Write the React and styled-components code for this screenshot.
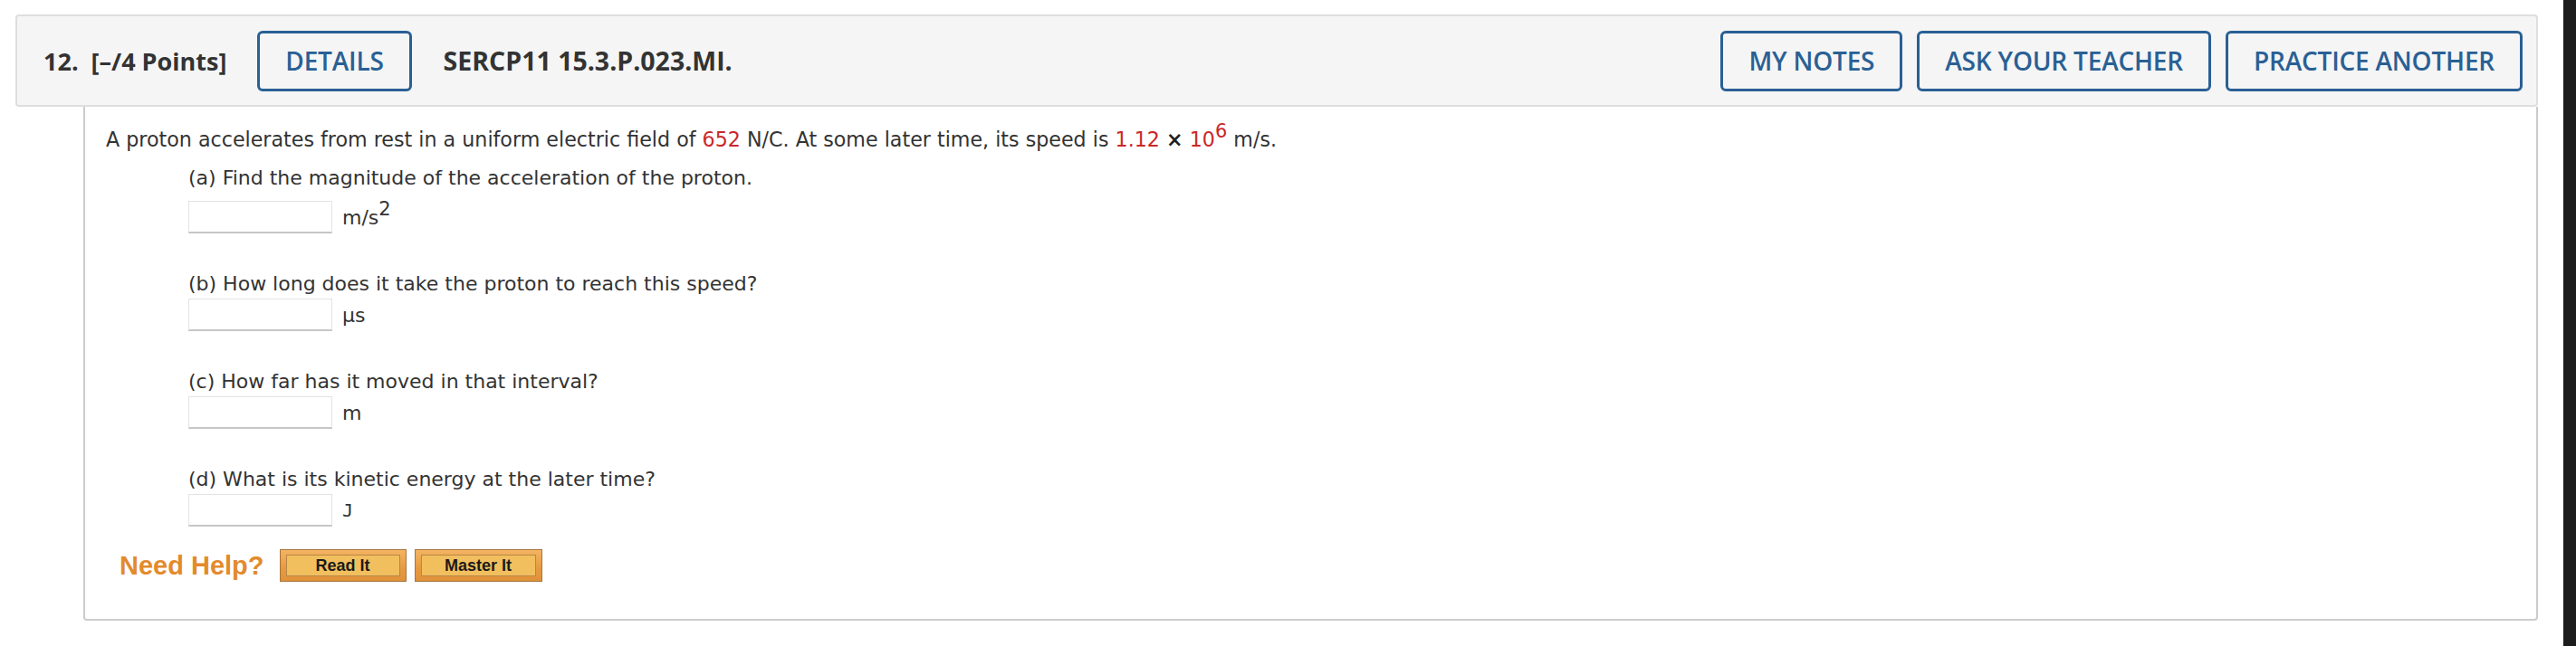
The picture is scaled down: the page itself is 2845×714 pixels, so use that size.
import React from "react";
import styled, { createGlobalStyle } from "styled-components";

const GlobalStyle = createGlobalStyle`
  body {
    margin: 0;
    background: #ffffff;
  }
`;

const Page = styled.div`
  display: flex;
  width: 2845px;
  height: 714px;
  overflow: hidden;
`;

const Main = styled.div`
  flex: 1;
  padding: 16px 28px 0 17px;
`;

const EdgeStrip = styled.div`
  width: 14px;
  background: #1d1d1d;
`;

const Header = styled.div`
  height: 98px;
  display: flex;
  align-items: center;
  background: #f5f5f5;
  border: 2px solid #dedede;
  border-radius: 4px;
  padding: 0 15px 0 29px;
  font-family: "Open Sans", "Liberation Sans", sans-serif;
`;

const Number = styled.span`
  font-size: 27px;
  font-weight: 700;
  color: #333333;
  margin-right: 14px;
`;

const Points = styled.span`
  font-size: 27px;
  font-weight: 700;
  color: #333333;
  margin-right: 34px;
`;

const OutlineButton = styled.button`
  height: 67px;
  padding: 0 ${(props) => props.$pad || 28}px;
  border: 3px solid #2a6094;
  border-radius: 6px;
  background: #f5f5f5;
  color: #2a6094;
  font-family: "Open Sans", "Liberation Sans", sans-serif;
  font-size: 28px;
  font-weight: 600;
  letter-spacing: -0.2px;
`;

const Code = styled.span`
  font-size: 28.5px;
  font-weight: 700;
  color: #333333;
  margin-left: 35px;
`;

const Spacer = styled.div`
  flex: 1;
`;

const ButtonRow = styled.div`
  display: flex;
  gap: 16px;
`;

const Panel = styled.div`
  margin-left: 75px;
  height: 568px;
  box-sizing: border-box;
  border: 2px solid #cccccc;
  border-top: none;
  border-radius: 0 0 4px 4px;
  padding: 21px 23px 0 23px;
  font-family: "DejaVu Sans", Verdana, sans-serif;
  font-size: 22px;
  color: #333333;
`;

const Intro = styled.p`
  margin: 0;
  line-height: 30px;
  font-size: 22.2px;
`;

const Red = styled.span`
  color: #c9282b;
`;

const Times = styled.span`
  color: #222222;
  font-weight: 700;
`;

const Sup = styled.sup`
  font-size: 21px;
  line-height: 0;
  vertical-align: 10px;
`;

const Questions = styled.div`
  margin-left: 91px;
  margin-top: 13px;
`;

const Part = styled.div`
  margin-bottom: 41px;
`;

const Prompt = styled.div`
  line-height: 30px;
`;

const AnswerRow = styled.div`
  display: flex;
  align-items: center;
  margin-top: ${(props) => props.$top || 1}px;
`;

const AnswerBox = styled.div`
  width: 157px;
  height: 33px;
  border: 1px solid #e3e3e3;
  border-bottom: 2px solid #c6c6c6;
  background: #ffffff;
`;

const Unit = styled.span`
  margin-left: 11px;
  font-family: ${(props) =>
    props.$mono ? '"DejaVu Sans Mono", "Liberation Mono", monospace' : "inherit"};
  font-size: ${(props) => (props.$mono ? 20 : 22)}px;
`;

const HelpRow = styled.div`
  display: flex;
  align-items: center;
  margin-top: -16px;
  margin-left: 15px;
`;

const NeedHelp = styled.span`
  font-family: "Liberation Sans", Arial, sans-serif;
  font-size: 29px;
  font-weight: 700;
  color: #e38a2c;
  margin-right: 17px;
`;

const HelpButton = styled.div`
  width: ${(props) => props.$w}px;
  height: 36px;
  box-sizing: border-box;
  margin-right: 9px;
  padding: 5px 6px;
  border: 1px solid #a6763c;
  background: linear-gradient(#f4b463, #e69a3e 60%, #e0923a);
`;

const HelpInner = styled.div`
  height: 100%;
  box-sizing: border-box;
  border: 1px solid #b88648;
  background: #f2bf5e;
  display: flex;
  align-items: center;
  justify-content: center;
  font-family: "Liberation Sans", Arial, sans-serif;
  font-size: 18px;
  font-weight: 700;
  color: #1a1a1a;
`;

const parts = [
  { label: "(a) Find the magnitude of the acceleration of the proton.", unit: "m/s", sup: "2", top: 10 },
  { label: "(b) How long does it take the proton to reach this speed?", unit: "µs" },
  { label: "(c) How far has it moved in that interval?", unit: "m" },
  { label: "(d) What is its kinetic energy at the later time?", unit: "J", mono: true },
];

export default function App() {
  return (
    <>
      <GlobalStyle />
      <Page>
        <Main>
          <Header>
            <Number>12.</Number>
            <Points>[–/4 Points]</Points>
            <OutlineButton $pad={28}>DETAILS</OutlineButton>
            <Code>SERCP11 15.3.P.023.MI.</Code>
            <Spacer />
            <ButtonRow>
              <OutlineButton $pad={28}>MY NOTES</OutlineButton>
              <OutlineButton $pad={28}>ASK YOUR TEACHER</OutlineButton>
              <OutlineButton $pad={28}>PRACTICE ANOTHER</OutlineButton>
            </ButtonRow>
          </Header>
          <Panel>
            <Intro>
              A proton accelerates from rest in a uniform electric field of <Red>652</Red> N/C. At some
              later time, its speed is <Red>1.12</Red> <Times>×</Times> <Red>10<Sup>6</Sup></Red> m/s.
            </Intro>
            <Questions>
              {parts.map((p) => (
                <Part key={p.label}>
                  <Prompt>{p.label}</Prompt>
                  <AnswerRow $top={p.top}>
                    <AnswerBox />
                    <Unit $mono={p.mono}>
                      {p.unit}
                      {p.sup && <Sup>{p.sup}</Sup>}
                    </Unit>
                  </AnswerRow>
                </Part>
              ))}
            </Questions>
            <HelpRow>
              <NeedHelp>Need Help?</NeedHelp>
              <HelpButton $w={140}>
                <HelpInner>Read It</HelpInner>
              </HelpButton>
              <HelpButton $w={141}>
                <HelpInner>Master It</HelpInner>
              </HelpButton>
            </HelpRow>
          </Panel>
        </Main>
        <EdgeStrip />
      </Page>
    </>
  );
}
